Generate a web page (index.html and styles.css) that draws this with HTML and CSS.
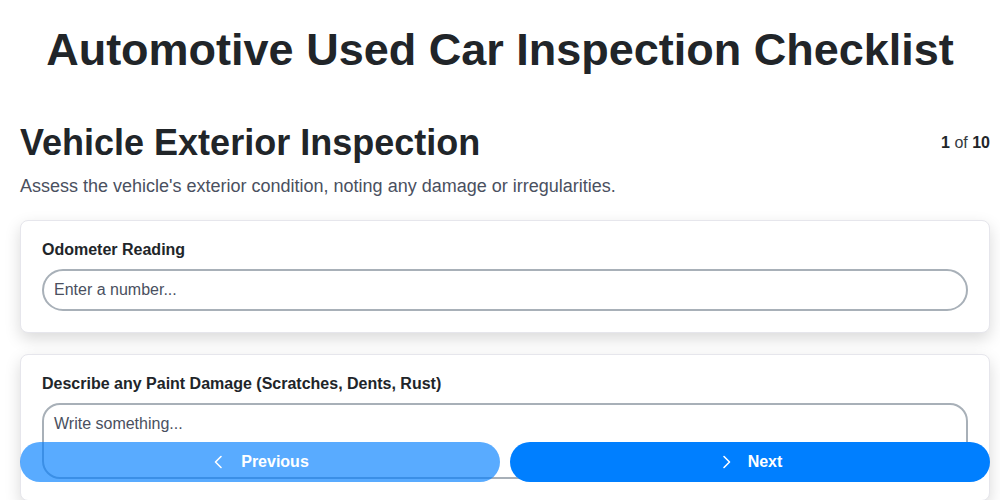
FILE: index.html
```html
<!DOCTYPE html>
<html lang="en">
<head>
    <meta charset="UTF-8">
    <meta name="viewport" content="width=device-width, initial-scale=1.0">
    <title>Used Car Inspection</title>
    <link rel="stylesheet" href="styles.css">
</head>
<body>
    <h1 class="page-title">Automotive Used Car Inspection Checklist</h1>

    <div class="form-container">
        <div class="section-header">
            <h2 class="section-title">Vehicle Exterior Inspection</h2>
            <div class="step-count"><b>1</b> of <b>10</b></div>
        </div>
        <p class="section-desc">Assess the vehicle's exterior condition, noting any damage or irregularities.</p>

        <div class="question-card">
            <label class="question-label" for="odometer">Odometer Reading</label>
            <input type="number" id="odometer" class="text-input" placeholder="Enter a number...">
        </div>

        <div class="question-card">
            <label class="question-label" for="paint">Describe any Paint Damage (Scratches, Dents, Rust)</label>
            <textarea id="paint" class="text-area" placeholder="Write something..."></textarea>
        </div>
    </div>

    <div class="nav-buttons">
        <button class="nav-btn prev-btn" disabled>
            <svg width="16" height="16" viewBox="0 0 16 16" fill="none" stroke="currentColor" stroke-width="1.6" stroke-linecap="round" stroke-linejoin="round"><path d="M10 2.5 4.5 8l5.5 5.5"/></svg>
            Previous
        </button>
        <button class="nav-btn next-btn">
            <svg width="16" height="16" viewBox="0 0 16 16" fill="none" stroke="currentColor" stroke-width="1.6" stroke-linecap="round" stroke-linejoin="round"><path d="M6 2.5 11.5 8 6 13.5"/></svg>
            Next
        </button>
    </div>
</body>
</html>
```

FILE: styles.css
```css
body {
    margin: 0;
    background-color: #ffffff;
    font-family: "Liberation Sans", Arial, sans-serif;
    color: #1f2328;
}
.page-title {
    font-family: "Liberation Sans", Arial, sans-serif;
    font-size: 45px;
    font-weight: bold;
    text-align: center;
    margin: 0;
    padding-top: 25px;
    line-height: 50px;
    color: #212529;
}
.form-container {
    padding: 0 10px 80px 20px;
    margin-top: 47px;
}
.section-header {
    display: flex;
    justify-content: space-between;
    align-items: flex-start;
}
.section-title {
    font-size: 36px;
    font-weight: bold;
    margin: 0;
    line-height: 42px;
    color: #212529;
}
.step-count {
    font-size: 16px;
    color: #343a40;
    margin-top: 12px;
}
.step-count b {
    color: #212529;
}
.section-desc {
    font-size: 18px;
    color: #4a5060;
    margin: 12px 0 23px 0;
}
.question-card {
    background: #fff;
    border: 1px solid #e6e6ec;
    border-radius: 8px;
    box-shadow: 0 6px 16px rgba(0, 0, 0, 0.15);
    padding: 20px 21px 21px 21px;
    margin-bottom: 21px;
}
.question-label {
    display: block;
    font-size: 16px;
    font-weight: bold;
    color: #212529;
    margin-bottom: 10px;
}
.text-input, .text-area {
    box-sizing: border-box;
    width: 100%;
    font-family: "Liberation Sans", Arial, sans-serif;
    font-size: 16px;
    color: #212529;
    border: 2px solid #a8b0b8;
    padding: 0 10px;
    outline: none;
    background: #fff;
}
.text-input {
    height: 42px;
    border-radius: 21px;
}
.text-area {
    height: 76px;
    border-radius: 18px;
    padding-top: 10px;
    resize: none;
    display: block;
}
.text-input::placeholder, .text-area::placeholder {
    color: #4a5060;
}
.nav-buttons {
    position: fixed;
    left: 20px;
    right: 10px;
    bottom: 18px;
    display: flex;
    gap: 10px;
}
.nav-btn {
    flex: 1;
    height: 40px;
    border: none;
    border-radius: 20px;
    background-color: #007fff;
    color: #fff;
    font-family: "Liberation Sans", Arial, sans-serif;
    font-size: 16px;
    font-weight: bold;
    display: flex;
    align-items: center;
    justify-content: center;
    gap: 14px;
    cursor: pointer;
}
.prev-btn {
    opacity: 0.65;
    cursor: default;
}
```
